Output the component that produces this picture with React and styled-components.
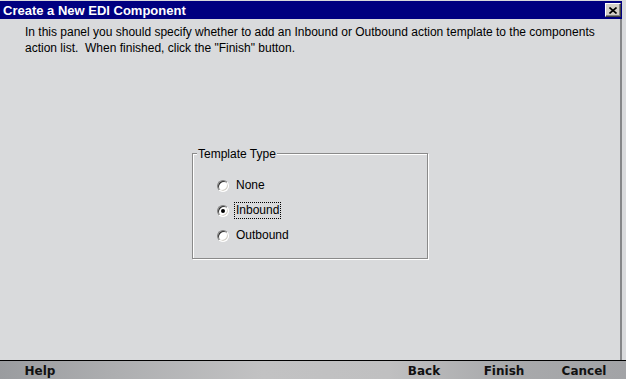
import React from "react";
import styled, { createGlobalStyle } from "styled-components";

const Global = createGlobalStyle`
  html, body { margin: 0; padding: 0; background: #d9dadc; }
  body { width: 626px; height: 379px; overflow: hidden; }
`;

const Frame = styled.div`
  width: 626px;
  height: 379px;
  display: flex;
  flex-direction: column;
  background: #d9dadc;
  overflow: hidden;
  font-family: "Liberation Sans", Arial, sans-serif;
`;

const Window = styled.div`
  width: 622px;
  flex: 1;
  display: flex;
  flex-direction: column;
  padding-top: 1px;
  min-height: 0;
`;

const TitleBar = styled.div`
  height: 18px;
  background: #000080;
  color: #fff;
  font: bold 13px "Liberation Sans", Arial, sans-serif;
  display: flex;
  align-items: center;
  justify-content: space-between;
  padding: 0 1px 0 3px;
`;

const CloseButton = styled.div`
  width: 16px;
  height: 14px;
  box-sizing: border-box;
  background: #d4d0c8;
  border-top: 1px solid #fff;
  border-left: 1px solid #fff;
  border-right: 1px solid #404040;
  border-bottom: 1px solid #404040;
  box-shadow: inset -1px -1px 0 #808080;
  display: flex;
  align-items: center;
  justify-content: center;
`;

const Body = styled.div`
  flex: 1;
  box-sizing: border-box;
  border-right: 2px solid #858688;
  padding: 5px 0 0 25px;
  display: flex;
  flex-direction: column;
`;

const Intro = styled.p`
  margin: 0;
  font-size: 12px;
  line-height: 16px;
  color: #000;
`;

const GroupWrap = styled.div`
  margin-top: 97px;
  margin-left: 167px;
`;

const Group = styled.div`
  position: relative;
  width: 236px;
  height: 106px;
  box-sizing: border-box;
  border: 1px solid #8a8a8a;
  box-shadow: inset 1px 1px 0 #fff, 1px 1px 0 #fff;
  padding: 23px 0 0 24px;
  display: flex;
  flex-direction: column;
  gap: 8px;
`;

const GroupTitle = styled.span`
  position: absolute;
  top: -6px;
  left: 4px;
  padding: 0 1px;
  background: #d9dadc;
  font-size: 12px;
  line-height: 13px;
  color: #000;
`;

const Row = styled.label`
  display: flex;
  align-items: center;
  height: 17px;
  gap: 5px;
`;

const Radio = styled.span`
  position: relative;
  width: 12px;
  height: 12px;
  box-sizing: border-box;
  border-radius: 50%;
  border: 1px solid;
  border-color: #808080 #fff #fff #808080;
  background: #fff;
  box-shadow: inset 1px 1px 0 #303030, inset -1px -1px 0 #d4d0c8;
  &::after {
    content: "";
    display: ${(p) => (p.$checked ? "block" : "none")};
    position: absolute;
    left: 3px;
    top: 3px;
    width: 4px;
    height: 4px;
    border-radius: 50%;
    background: #000;
  }
`;

const Label = styled.span`
  font-size: 12px;
  line-height: 13px;
  padding: 1px 1px;
  border: 1px dotted ${(p) => (p.$focused ? "#000" : "transparent")};
  color: #000;
`;

const BottomBar = styled.div`
  height: 18px;
  border-top: 1px solid #000;
  background: linear-gradient(
    to right,
    #9a9c9f 0%,
    #adaeb0 18%,
    #c2c2c3 42%,
    #c0c0c1 62%,
    #a9aaac 80%,
    #a2a3a6 100%
  );
  display: flex;
  padding-right: 2px;
`;

const NavButton = styled.div`
  width: 80px;
  padding-top: 2px;
  text-align: center;
  font: bold 12px "DejaVu Sans", Verdana, sans-serif;
  line-height: 16px;
  color: #111;
  margin-left: ${(p) => (p.$push ? "auto" : "0")};
`;

const options = [
  { label: "None", checked: false },
  { label: "Inbound", checked: true },
  { label: "Outbound", checked: false },
];

export default function App() {
  return (
    <>
      <Global />
      <Frame>
        <Window>
          <TitleBar>
            <span>Create a New EDI Component</span>
            <CloseButton>
              <svg width="8" height="7" viewBox="0 0 8 7">
                <path d="M0.5 0.5 L7.5 6.5 M7.5 0.5 L0.5 6.5" stroke="#000" strokeWidth="1.6" />
              </svg>
            </CloseButton>
          </TitleBar>
          <Body>
            <Intro>
              In this panel you should specify whether to add an Inbound or Outbound action template to the components
              <br />
              action list.&nbsp; When finished, click the "Finish" button.
            </Intro>
            <GroupWrap>
              <Group>
                <GroupTitle>Template Type</GroupTitle>
                {options.map((o) => (
                  <Row key={o.label}>
                    <Radio $checked={o.checked} />
                    <Label $focused={o.checked}>{o.label}</Label>
                  </Row>
                ))}
              </Group>
            </GroupWrap>
          </Body>
        </Window>
        <BottomBar>
          <NavButton>Help</NavButton>
          <NavButton $push>Back</NavButton>
          <NavButton>Finish</NavButton>
          <NavButton>Cancel</NavButton>
        </BottomBar>
      </Frame>
    </>
  );
}
